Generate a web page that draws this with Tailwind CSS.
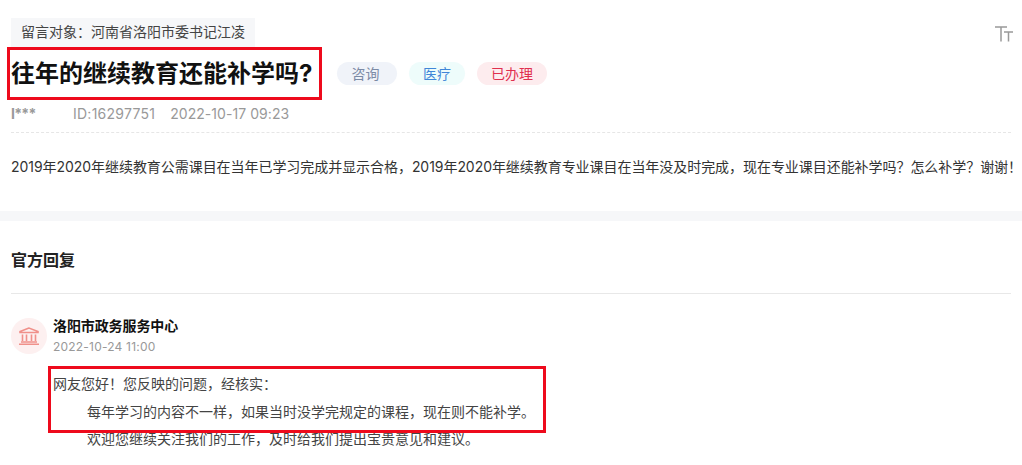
<!DOCTYPE html>
<html lang="zh-cn">
<head>
    <meta charset="UTF-8">
    <title>留言详情</title>
    <script src="https://cdn.jsdelivr.net/npm/@tailwindcss/browser@4"></script>
</head>
<body class="bg-white font-['Inter','Noto_Sans_CJK_SC',sans-serif] text-[14px] text-[#333]">
<div class="relative w-[1022px] h-[465px] overflow-hidden">
    <!-- question -->
    <div class="px-[11px] h-[211px]">
        <div class="pt-[18px] flex justify-between">
            <div class="h-[29px] px-[10px] bg-[#f6f7f9] leading-[28px] text-[#444]">留言对象：河南省洛阳市委书记江凌</div>
            <svg class="mt-[8px] -mr-[2px]" width="18" height="16" viewBox="0 0 18 16" fill="none" stroke="#999" stroke-width="1.5">
                <path d="M0 1H12M6 1V15.5M9 6H18M13.5 6V15.5"/>
            </svg>
        </div>
        <div class="flex items-center h-[53px]">
            <h1 class="w-[326px] text-[24px] font-bold text-[#111] leading-[53px] whitespace-nowrap">往年的继续教育还能补学吗?</h1>
            <span class="w-[60px] h-[23px] pr-[3px] rounded-full bg-[#f0f3f9] text-[#7c8aa5] text-center leading-[23px]">咨询</span>
            <span class="ml-[12px] w-[56px] h-[23px] rounded-full bg-[#eefcfb] text-[#3f86d8] text-center leading-[23px]">医疗</span>
            <span class="ml-[12px] w-[70px] h-[23px] rounded-full bg-[#fdecee] text-[#e0304e] text-center leading-[23px]">已办理</span>
        </div>
        <div class="flex h-[32px] pb-[6px] items-center text-[#999]">
            <span class="w-[62px] font-bold tracking-[-0.7px]">I***</span>
            <span class="tracking-[0.25px]">ID:16297751</span>
            <span class="ml-[15px] tracking-[0.06px]">2022-10-17 09:23</span>
        </div>
        <div class="border-t border-dashed border-[#e6e6e6]"></div>
        <p class="mt-[24px] leading-[20px] whitespace-nowrap tracking-[-0.05px]">2019年2020年继续教育公需课目在当年已学习完成并显示合格，2019年2020年继续教育专业课目在当年没及时完成，现在专业课目还能补学吗？怎么补学？谢谢！</p>
    </div>
    <div class="h-[10px] bg-[#f6f7f9]"></div>
    <!-- reply -->
    <div class="px-[11px]">
        <h2 class="h-[73px] pt-[28px] text-[16px] font-bold leading-[22px] text-[#222] border-b border-[#e8e8e8]">官方回复</h2>
        <div class="flex mt-[24px]">
            <div class="w-[36px] h-[36px] rounded-full bg-[#fdf0f0] flex items-center justify-center">
                <svg width="20" height="18" viewBox="0 0 20 18" fill="none" stroke="#f0908a" stroke-width="1.6">
                    <path d="M10 1L1 4.5V5.5H19V4.5ZM3.5 7.5V14M7.5 7.5V14M12.5 7.5V14M16.5 7.5V14M2 15H18M0 17.2H20"/>
                </svg>
            </div>
            <div class="ml-[6px] -mt-[1px]">
                <div class="text-[14px] font-bold leading-[18px] text-[#111] tracking-[-0.1px]">洛阳市政务服务中心</div>
                <div class="mt-[3px] text-[12px] leading-[18px] text-[#999] tracking-[0.2px]">2022-10-24 11:00</div>
            </div>
        </div>
        <div class="ml-[42px] mt-[14px] leading-[27.5px] text-[#444] whitespace-nowrap">
            <p>网友您好！您反映的问题，经核实：</p>
            <p class="pl-[34px]">每年学习的内容不一样，如果当时没学完规定的课程，现在则不能补学。</p>
            <p class="pl-[34px]">欢迎您继续关注我们的工作，及时给我们提出宝贵意见和建议。</p>
        </div>
    </div>
    <!-- annotation boxes -->
    <div class="absolute left-[7px] top-[47px] w-[315px] h-[53px] border-[3px] border-[#ee0a1c]"></div>
    <div class="absolute left-[48px] top-[366px] w-[498px] h-[67px] border-[3px] border-[#ee0a1c]"></div>
</div>
</body>
</html>
